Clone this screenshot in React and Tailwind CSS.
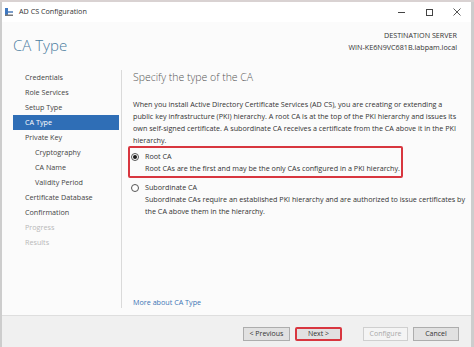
import React from 'react'

const navItems = [
    { label: 'Credentials' },
    { label: 'Role Services' },
    { label: 'Setup Type' },
    { label: 'CA Type', active: true },
    { label: 'Private Key' },
    { label: 'Cryptography', sub: true },
    { label: 'CA Name', sub: true },
    { label: 'Validity Period', sub: true },
    { label: 'Certificate Database' },
    { label: 'Confirmation' },
    { label: 'Progress', disabled: true },
    { label: 'Results', disabled: true },
]

const Radio = ({ checked }) => (
    <span className="w-[8px] h-[8px] rounded-full border border-[#555] bg-white flex items-center justify-center shrink-0">
        {checked && <span className="w-[4px] h-[4px] rounded-full bg-[#1a1a1a]" />}
    </span>
)

const App = () => {
    return (
        <div className="w-[474px] h-[347px] bg-[#d9d2d2] pt-[2px] overflow-hidden">
            <div className="h-[345px] border-l-2 border-r-[3px] border-[#cdcdcd] bg-[#fbfbfb] flex flex-col font-['Open_Sans',sans-serif] text-[7.2px] text-[#333]">

                {/* title bar */}
                <div className="h-[20px] bg-white flex items-center">
                    <svg className="ml-[3px]" width="8" height="8" viewBox="0 0 8 8">
                        <rect x="0" y="0" width="3" height="7" fill="#3f78c0" />
                        <rect x="3" y="3" width="5" height="2" fill="#7a9cc8" />
                        <rect x="0" y="6.5" width="8" height="1.5" fill="#777" />
                    </svg>
                    <span className="ml-[6px] leading-none">AD CS Configuration</span>
                    <div className="ml-auto flex h-full">
                        <div className="w-[28px] flex items-center justify-center">
                            <span className="w-[7px] h-px bg-[#444]" />
                        </div>
                        <div className="w-[28px] flex items-center justify-center">
                            <span className="w-[7px] h-[7px] border border-[#444]" />
                        </div>
                        <div className="w-[28px] flex items-center justify-center">
                            <svg width="8" height="8" viewBox="0 0 8 8">
                                <path d="M0.5 0.5 L7.5 7.5 M7.5 0.5 L0.5 7.5" stroke="#444" strokeWidth="0.9" />
                            </svg>
                        </div>
                    </div>
                </div>

                {/* header */}
                <div className="h-[43px] flex justify-between">
                    <h1 className="pl-[11px] pt-[13px] text-[15px] leading-[20px] font-light text-[#4a7c9f]">CA Type</h1>
                    <div className="pt-[7px] pr-[14px] text-right leading-[12px] text-[#333]">
                        <p>DESTINATION SERVER</p>
                        <p>WIN-KE6N9VC681B.labpam.local</p>
                    </div>
                </div>

                {/* body */}
                <div className="h-[250px] flex">
                    <ul className="w-[119px] pt-[5px] shrink-0">
                        {navItems.map((item) => (
                            <li
                                key={item.label}
                                className={`ml-[11px] w-[106px] h-[15px] flex items-center ${item.sub ? 'pl-[22px]' : 'pl-[12px]'} ${item.active ? 'bg-[#2f6eb6] text-white' : item.disabled ? 'text-[#b8b8b8]' : 'text-[#444]'}`}
                            >
                                {item.label}
                            </li>
                        ))}
                    </ul>

                    <div className="flex-1 border-l border-[#dadada] mt-[5px] mb-[7px] pl-[11px] flex flex-col">
                        <h2 className="text-[10.5px] leading-[14px] font-light text-[#555]">Specify the type of the CA</h2>
                        <p className="mt-[14px] leading-[12px] text-[#333]">
                            When you install Active Directory Certificate Services (AD CS), you are creating or extending a<br />
                            public key infrastructure (PKI) hierarchy. A root CA is at the top of the PKI hierarchy and issues its<br />
                            own self-signed certificate. A subordinate CA receives a certificate from the CA above it in the PKI<br />
                            hierarchy.
                        </p>

                        <div className="ml-[-5px] w-[275px] border-2 border-[#d8363f] rounded-[2px] pt-[3px] pb-[2px] pl-px">
                            <div className="h-[11px] flex items-center gap-[6px]">
                                <Radio checked />
                                <span>Root CA</span>
                            </div>
                            <p className="h-[12px] leading-[12px] pl-[14px]">Root CAs are the first and may be the only CAs configured in a PKI hierarchy.</p>
                        </div>

                        <div className="mt-[4px] h-[11px] flex items-center gap-[6px] ml-[-2px]">
                            <Radio />
                            <span>Subordinate CA</span>
                        </div>
                        <p className="pl-[12px] leading-[12px]">
                            Subordinate CAs require an established PKI hierarchy and are authorized to issue certificates by<br />
                            the CA above them in the hierarchy.
                        </p>

                        <a href="#" className="mt-auto leading-[12px] text-[#3d76b5]">More about CA Type</a>
                    </div>
                </div>

                {/* footer */}
                <div className="flex-1 border-t border-[#dedede] bg-[#f0f0f0] flex justify-end items-start pt-[11px] pr-[12px] text-[7px]">
                    <button className="w-[47px] h-[14px] bg-[#e1e1e1] border border-[#adadad] text-[#333]">&lt; Previous</button>
                    <button className="ml-[5px] w-[47px] h-[14px] bg-[#e1e1e1] border-2 border-[#d8363f] rounded-[2px] text-[#333]">Next &gt;</button>
                    <button className="ml-[21px] w-[45px] h-[14px] bg-[#f4f4f4] border border-[#cfcfcf] text-[#a8a8a8]">Configure</button>
                    <button className="ml-[5px] w-[46px] h-[14px] bg-[#e1e1e1] border border-[#adadad] text-[#333]">Cancel</button>
                </div>
            </div>
        </div>
    )
}

export default App
